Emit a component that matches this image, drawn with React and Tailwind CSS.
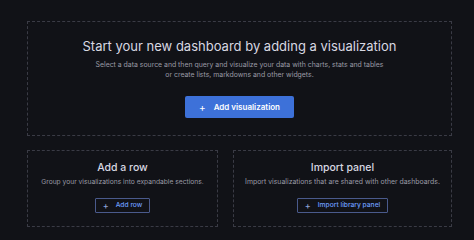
export default function App() {
  return (
    <div
      className="w-[474px] h-[240px] bg-[#111217] pl-[27px] pr-[22px] pt-[21px] overflow-hidden"
      style={{ fontFamily: "Inter, 'Noto Sans', sans-serif" }}
    >
      {/* main empty state */}
      <div className="h-[115px] border border-dashed border-[#3a3b45] flex flex-col items-center pt-[15px]">
        <h1 className="text-[13px] leading-[18px] text-[#d8d8e2]">
          Start your new dashboard by adding a visualization
        </h1>
        <p className="mt-[5px] text-[6.9px] leading-[10px] text-[#9a9aa5] text-center">
          Select a data source and then query and visualize your data with charts, stats and tables
          <br />
          or create lists, markdowns and other widgets.
        </p>
        <button className="mt-[16px] h-[22px] w-[109px] rounded-[2px] bg-[#3d71d9] text-white text-[8px] font-semibold flex items-center justify-center gap-[8px]">
          <span className="text-[10px] font-normal">+</span>
          <span>Add visualization</span>
        </button>
      </div>

      <div className="mt-[14px] flex gap-[15px]">
        <div className="w-[191px] h-[77px] border border-dashed border-[#3a3b45] flex flex-col items-center pt-[10px]">
          <h2 className="text-[10.5px] leading-[13px] font-medium text-[#d8d8e2]">Add a row</h2>
          <p className="mt-[4px] text-[6.7px] leading-[8px] text-[#9a9aa5]">
            Group your visualizations into expandable sections.
          </p>
          <button className="mt-[12px] h-[15px] px-[7px] border border-[#4a5a8c] rounded-[1px] text-[6.7px] font-medium text-[#6e9fff] flex items-center gap-[7px]">
            <span className="text-[9px] text-[#8ea3d8]">+</span>
            <span>Add row</span>
          </button>
        </div>
        <div className="flex-1 h-[77px] border border-dashed border-[#3a3b45] flex flex-col items-center pt-[10px]">
          <h2 className="text-[10.5px] leading-[13px] font-medium text-[#d8d8e2]">Import panel</h2>
          <p className="mt-[4px] text-[6.9px] leading-[8px] text-[#9a9aa5]">
            Import visualizations that are shared with other dashboards.
          </p>
          <button className="mt-[12px] h-[15px] px-[7px] border border-[#4a5a8c] rounded-[1px] text-[6.7px] font-medium text-[#6e9fff] flex items-center gap-[7px]">
            <span className="text-[9px] text-[#8ea3d8]">+</span>
            <span>Import library panel</span>
          </button>
        </div>
      </div>
    </div>
  );
}
